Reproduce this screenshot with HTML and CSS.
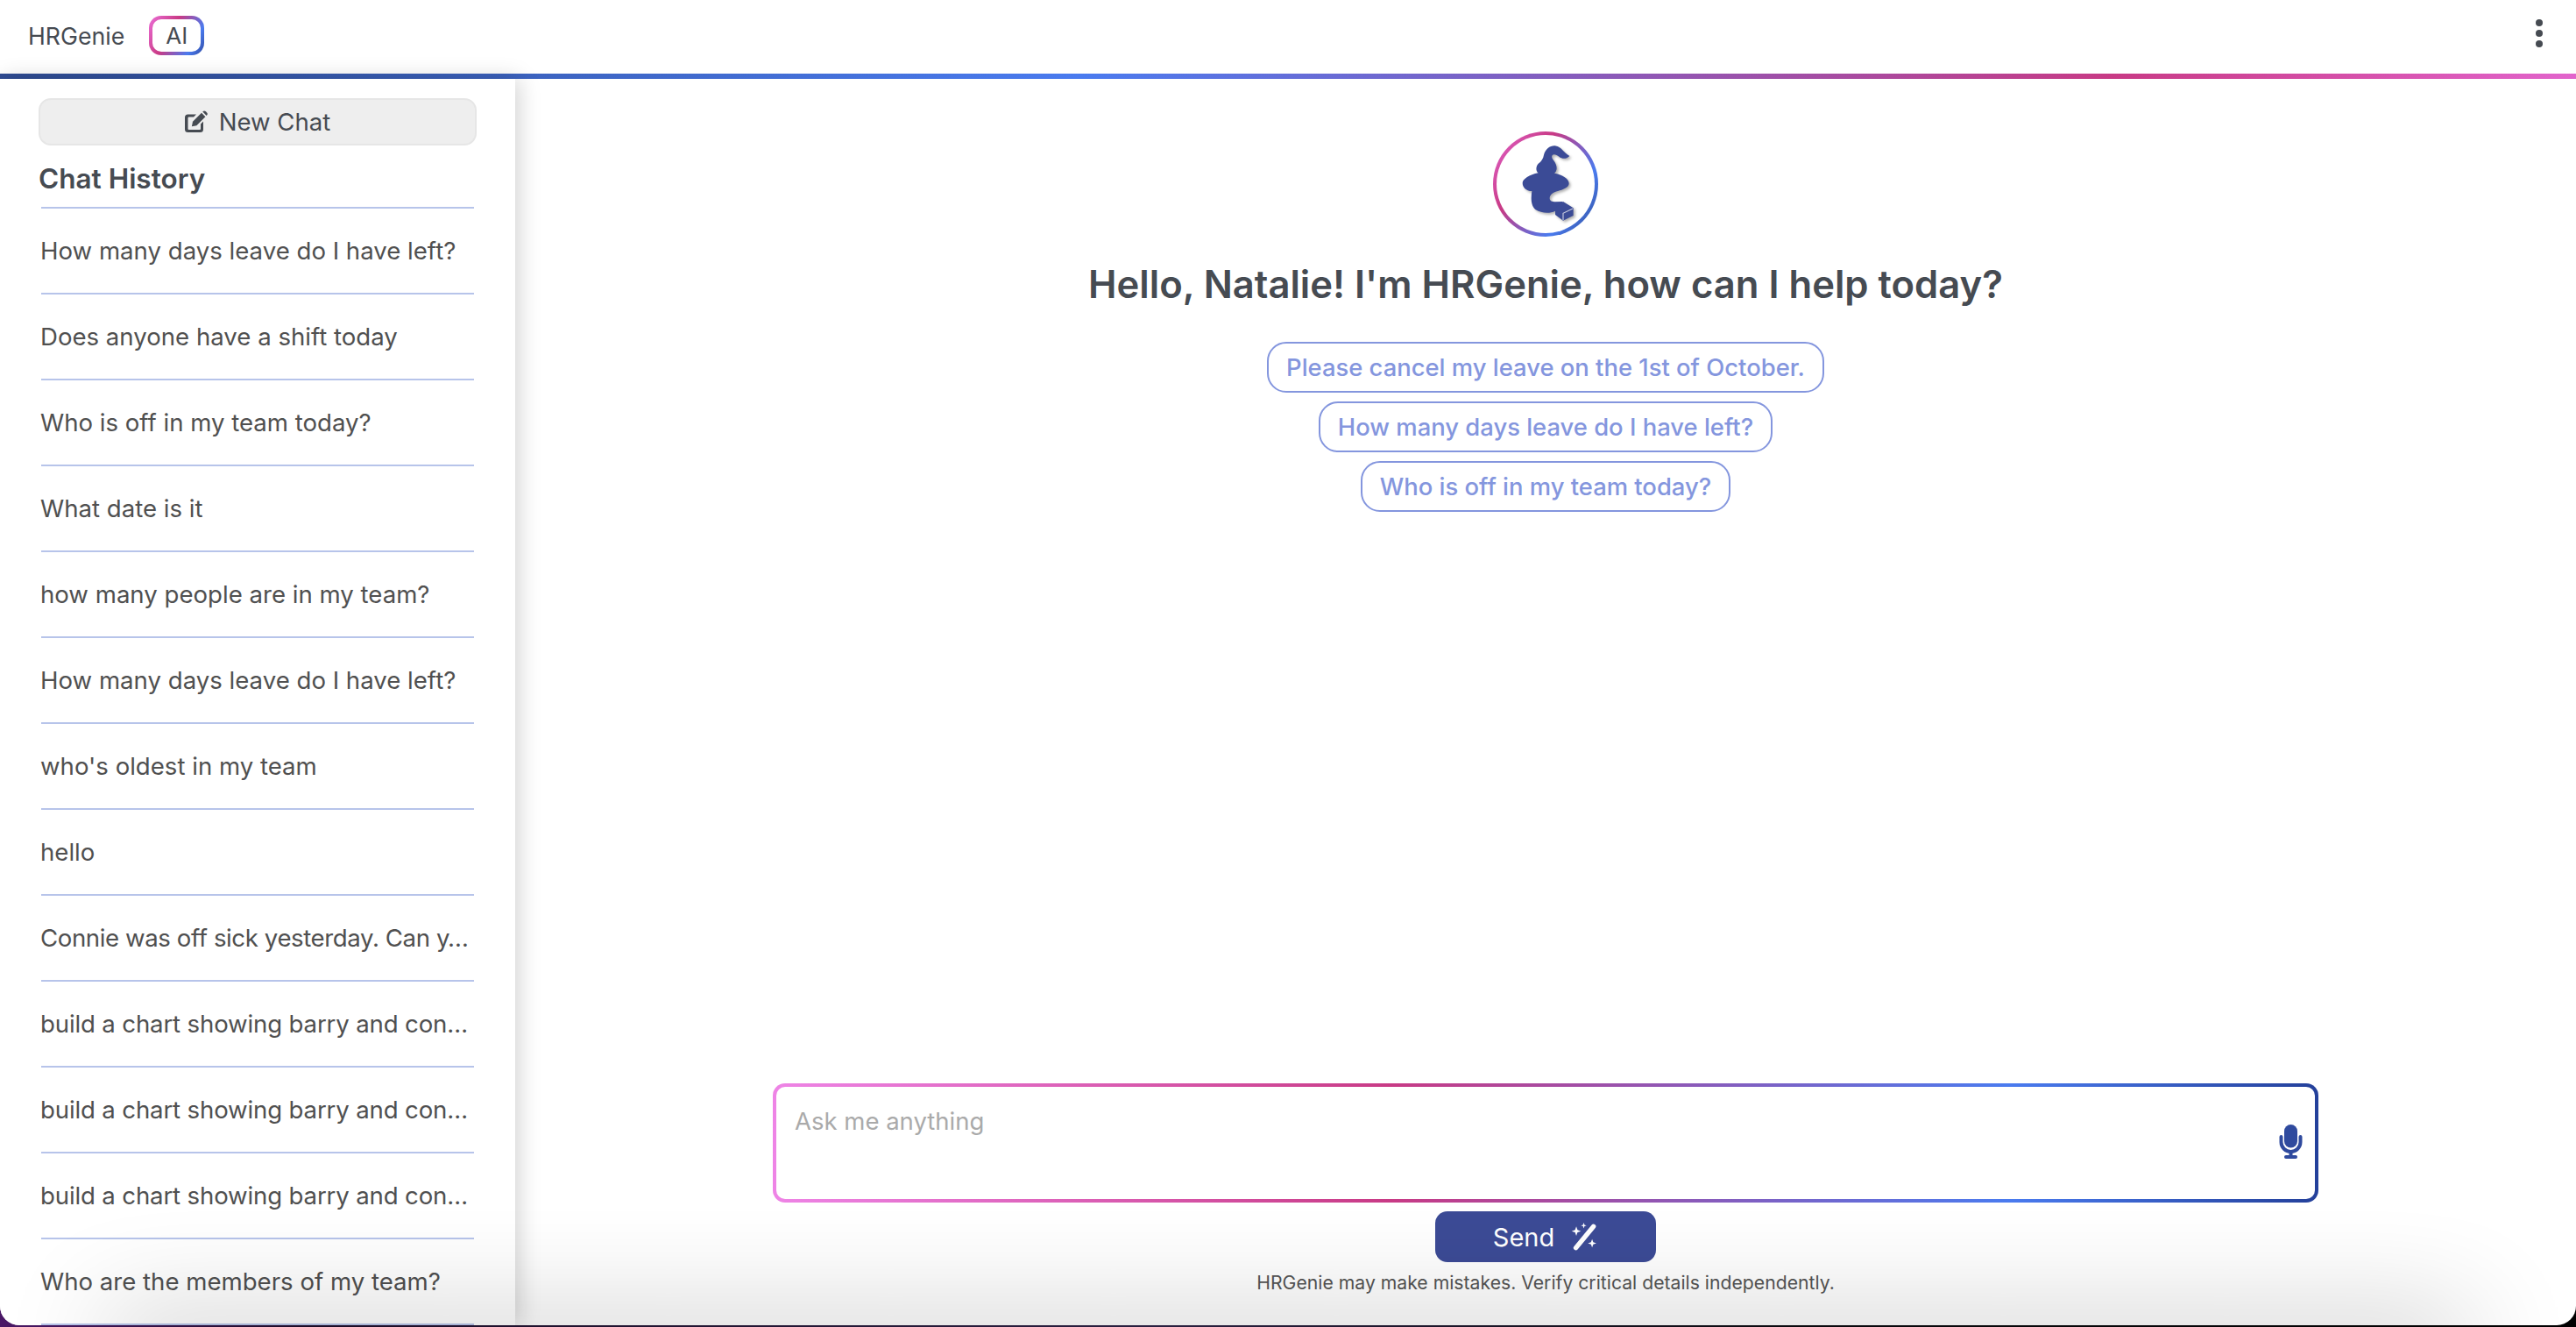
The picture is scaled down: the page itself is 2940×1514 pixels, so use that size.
FILE: index.html
```html
<!DOCTYPE html>
<html lang="en">
<head>
<meta charset="utf-8">
<title>HRGenie</title>
<link rel="stylesheet" href="styles.css">
</head>
<body>
<div class="window">
  <header class="topbar">
    <div class="brand">
      <span class="brand-name">HRGenie</span>
      <span class="ai-badge"><span class="ai-inner">AI</span></span>
    </div>
    <svg class="kebab" viewBox="0 0 12 36" aria-hidden="true"><circle cx="6" cy="6" r="4"/><circle cx="6" cy="18" r="4"/><circle cx="6" cy="30" r="4"/></svg>
  </header>
  <div class="rainbow"></div>
  <div class="body">
    <aside class="sidebar">
      <button class="new-chat">
        <svg class="edit-icon" viewBox="0 0 26 26" aria-hidden="true">
          <path d="M3.500 4.500H13L10 7.500H4.500a1 1 0 0 0-1 1V21a1 1 0 0 0 1 1H17a1 1 0 0 0 1-1v-5.500l3-3v9a3.500 3.500 0 0 1-3.500 3.500h-14A3.500 3.500 0 0 1 0 21.500V8a3.500 3.500 0 0 1 3.500-3.500z"/>
          <path d="M19 2.800l4.400 4.400-10 10-5.500 1.100 1.100-5.500z"/>
          <path d="M20.300 1.500l.4-.4a2.200 2.200 0 0 1 3 0l1.400 1.400a2.200 2.200 0 0 1 0 3l-.4.400z"/>
        </svg>
        <span>New Chat</span>
      </button>
      <h2 class="history-title">Chat History</h2>
      <ul class="history">
        <li>How many days leave do I have left?</li>
        <li>Does anyone have a shift today</li>
        <li>Who is off in my team today?</li>
        <li>What date is it</li>
        <li>how many people are in my team?</li>
        <li>How many days leave do I have left?</li>
        <li>who's oldest in my team</li>
        <li>hello</li>
        <li class="tighter">Connie was off sick yesterday. Can y…</li>
        <li class="tight">build a chart showing barry and con…</li>
        <li class="tight">build a chart showing barry and con…</li>
        <li class="tight">build a chart showing barry and con…</li>
        <li>Who are the members of my team?</li>
      </ul>
    </aside>
    <main class="chat">
      <section class="welcome">
        <div class="logo-ring">
          <div class="logo-inner">
            <svg class="genie" viewBox="12 12 336 336" aria-hidden="true">
              <path class="genie-body" d="M262 84C250 96 236 94 226 86C218 80 210 76 204 80C198 86 204 94 208 100C214 108 218 118 218 126C218 134 214 140 210 143C238 148 260 162 260 178C260 192 238 200 222 204C206 208 195 216 194 228C194 238 202 241 214 241L238 240V272H213C195 282 165 280 146 268C128 252 130 226 133 204C113 204 101 190 101 176C101 164 125 147 155 142C146 135 146 120 155 110C166 102 172 92 174 80C180 60 195 48 212 49C235 52 240 72 262 84Z"/>
              <path class="genie-body" d="M240 240L275 262V288L240 305L213 285V262Z"/>
              <path class="cube-line" d="M240 303V280L273 264"/>
            </svg>
          </div>
        </div>
        <h1 class="greeting">Hello, Natalie! I'm HRGenie, how can I help today?</h1>
        <div class="prompts">
          <button class="prompt">Please cancel my leave on the 1st of October.</button>
          <button class="prompt">How many days leave do I have left?</button>
          <button class="prompt">Who is off in my team today?</button>
        </div>
      </section>
      <section class="composer">
        <div class="input-frame">
          <div class="input-inner">
            <span class="placeholder">Ask me anything</span>
            <svg class="mic" viewBox="0 0 27 39" aria-hidden="true">
              <rect class="mic-fill" x="6" y="0" width="15" height="26.500" rx="7.500"/>
              <path class="mic-arc" d="M2.500 14v6a11 11 0 0 0 22 0v-6"/>
              <rect class="mic-fill" x="11.500" y="31" width="4" height="5"/>
              <rect class="mic-fill" x="6" y="35" width="15" height="4" rx="2"/>
            </svg>
          </div>
        </div>
        <button class="send">
          <span>Send</span>
          <svg class="wand" viewBox="0 0 32 32" aria-hidden="true">
            <path class="wand-stick" d="M27 5L8 28"/>
            <path d="M8.500 5l1.300 3.700 3.700 1.300-3.700 1.300-1.300 3.700-1.300-3.700L3.500 10l3.700-1.300z"/>
            <path d="M16.500 1l.8 2.200 2.200.8-2.200.8-.8 2.200-.8-2.200-2.200-.8 2.200-.8z"/>
            <path d="M25.500 18.500l1.200 3.300 3.300 1.200-3.300 1.200-1.200 3.300-1.200-3.300-3.300-1.200 3.300-1.200z"/>
          </svg>
        </button>
        <p class="disclaimer">HRGenie may make mistakes. Verify critical details independently.</p>
      </section>
    </main>
  </div>
</div>
</body>
</html>
```
FILE: styles.css
```css
* { box-sizing: border-box; }
html, body { margin: 0; padding: 0; height: 100%; }
body {
  background: linear-gradient(90deg, #4a1766 0, #1c0d28 12%, #2a2040 45%, #0a0a0e 70%, #000 100%);
  font-family: "Inter", "Open Sans", "Liberation Sans", sans-serif;
  color: #444;
  overflow: hidden;
}
.window {
  height: 1512px;
  background: #fff;
  border-radius: 0 0 22px 22px;
  display: flex;
  flex-direction: column;
  overflow: hidden;
  position: relative;
}
.window::after {
  content: "";
  position: absolute;
  left: 130px;
  right: 130px;
  bottom: -40px;
  height: 40px;
  box-shadow: 0 0 120px 10px rgba(0,0,0,.24);
  pointer-events: none;
  z-index: 2;
}
.topbar {
  height: 84px;
  padding: 0 36px 3px 32px;
  display: flex;
  align-items: center;
  justify-content: space-between;
  flex: none;
}
.brand { display: flex; align-items: center; gap: 28px; }
.brand-name { font-size: 26.700px; color: #464b52; }
.ai-badge {
  width: 63px;
  height: 45px;
  padding: 4px;
  border-radius: 14px;
  background: linear-gradient(120deg, #ec6fd8 0%, #c93a85 40%, #4a7bef 78%, #2f4aa0 100%);
  display: block;
}
.ai-inner {
  display: flex;
  width: 100%;
  height: 100%;
  align-items: center;
  justify-content: center;
  background: #fff;
  border-radius: 10px;
  font-size: 26px;
  color: #464b52;
}
.kebab { width: 12px; height: 36px; fill: #464b52; margin-bottom: 5px; }
.rainbow {
  height: 6px;
  flex: none;
  background: linear-gradient(90deg, #2f4c93 0%, #4a7bef 42%, #c83a85 82%, #e264cc 100%);
}
.body { flex: 1; min-height: 0; display: flex; }
.sidebar {
  width: 588px;
  flex: none;
  padding: 22px 44px 0;
  box-shadow: 4px 0 24px rgba(0,0,0,.18);
  position: relative;
  z-index: 1;
  overflow: hidden;
  background: #fff;
}
.new-chat {
  width: 100%;
  height: 54px;
  background: #eee;
  border: 2px solid #e6e6e6;
  border-radius: 14px;
  display: flex;
  align-items: center;
  justify-content: center;
  gap: 13px;
  font: inherit;
  font-size: 27.600px;
  color: #464b52;
}
.edit-icon { width: 26px; height: 26px; fill: #464b52; }
.history-title {
  margin: 18px 0 0;
  font-size: 31.500px;
  line-height: 40px;
  font-weight: 600;
  color: #464b52;
}
.history {
  list-style: none;
  margin: 12px 3px 0;
  padding: 0;
  border-top: 2px solid #b7c4ea;
}
.history li {
  height: 98px;
  line-height: 96px;
  font-size: 27.600px;
  color: #505050;
  white-space: nowrap;
  text-indent: -1px;
  border-bottom: 2px solid #b7c4ea;
}
.history .tight { letter-spacing: -.15px; }
.history .tighter { letter-spacing: -.4px; }
.chat {
  flex: 1;
  min-width: 0;
  display: flex;
  flex-direction: column;
  align-items: center;
  justify-content: space-between;
  position: relative;
}
.welcome { display: flex; flex-direction: column; align-items: center; padding-top: 60px; }
.logo-ring {
  width: 120px;
  height: 120px;
  padding: 4px;
  border-radius: 50%;
  background: linear-gradient(125deg, #e264cc 0%, #c83a85 35%, #4a7bef 72%, #2f4c93 100%);
}
.logo-inner {
  width: 100%;
  height: 100%;
  background: #fff;
  border-radius: 50%;
}
.genie { display: block; width: 112px; height: 112px; filter: drop-shadow(2px 2px 1.500px rgba(0,0,0,.3)); }
.genie-body { fill: #3b4b96; }
.cube-line { stroke: #c5c9de; stroke-width: 3.500; fill: none; }
.greeting {
  margin: 24px 0 0;
  font-size: 43.600px;
  line-height: 62px;
  font-weight: 600;
  color: #464b52;
}
.prompts { margin-top: 34px; display: flex; flex-direction: column; align-items: center; gap: 10px; }
.prompt {
  height: 58px;
  padding: 0 20px;
  background: #fff;
  border: 2px solid #8496de;
  border-radius: 22px;
  font: inherit;
  font-size: 27.400px;
  font-weight: 500;
  color: #8496de;
}
.composer { display: flex; flex-direction: column; align-items: center; padding-bottom: 34px; position: relative; z-index: 1; }
.input-frame {
  width: 1764px;
  height: 136px;
  padding: 4px;
  border-radius: 14px;
  background: linear-gradient(90deg, #ee84e6 0%, #c83a85 40%, #4a7bef 80%, #24409a 100%);
}
.input-inner {
  height: 100%;
  background: #fff;
  border-radius: 10px;
  padding: 19px 14px 0 21px;
  display: flex;
  justify-content: space-between;
}
.placeholder { font-size: 27.500px; line-height: 40px; color: #aaa; }
.mic { width: 27px; height: 39px; margin-top: 24px; }
.mic-fill { fill: #2f4a9e; }
.mic-arc { fill: none; stroke: #2f4a9e; stroke-width: 4; stroke-linecap: round; }
.send {
  margin-top: 10px;
  width: 252px;
  height: 58px;
  background: #3c4b96;
  border: 0;
  border-radius: 14px;
  color: #fff;
  font: inherit;
  font-size: 29px;
  display: flex;
  align-items: center;
  justify-content: center;
  gap: 16px;
}
.wand { width: 34px; height: 34px; fill: #fff; }
.wand-stick { fill: none; stroke: #fff; stroke-width: 5; stroke-linecap: round; }
.disclaimer { margin: 8px 0 0; font-size: 21.200px; line-height: 30px; color: #555; }
```
